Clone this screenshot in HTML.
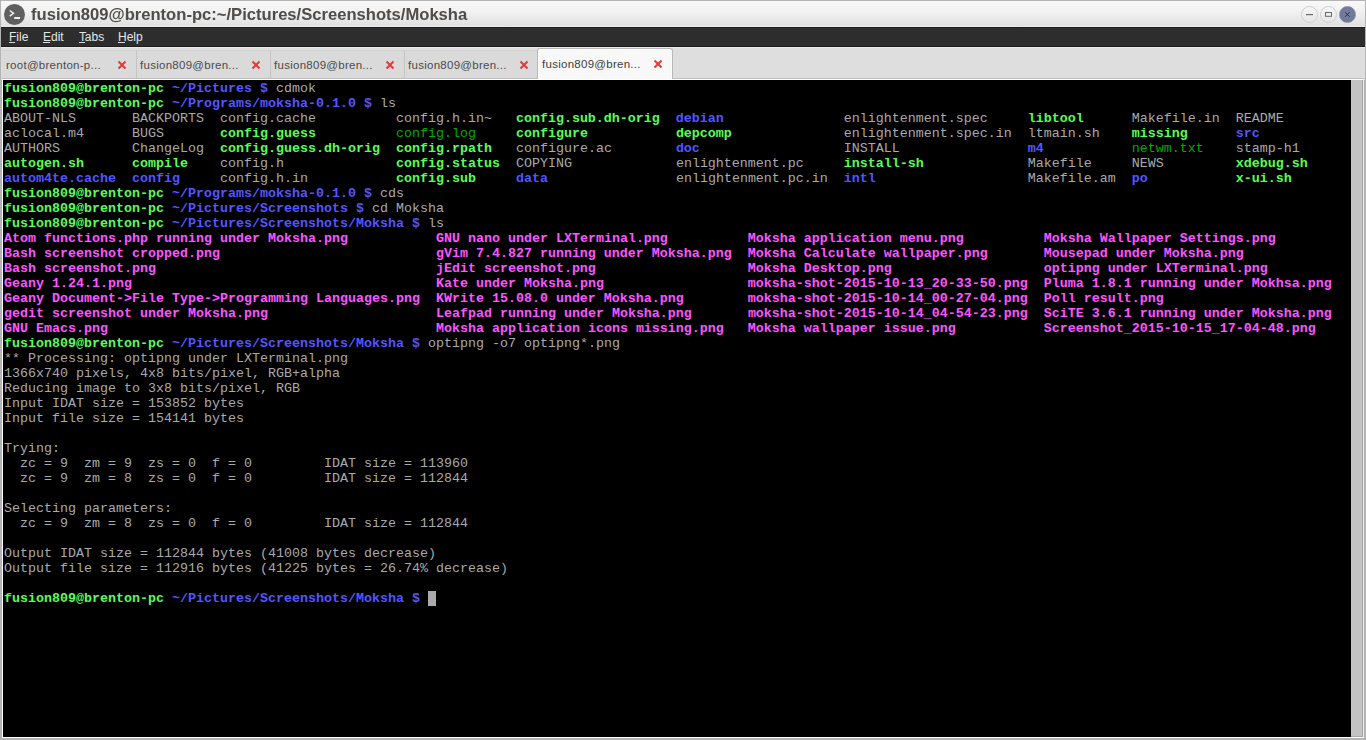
<!DOCTYPE html>
<html><head><meta charset="utf-8">
<style>
*{margin:0;padding:0;box-sizing:border-box}
html,body{width:1366px;height:740px;overflow:hidden;background:#b3b3b3}
body{position:relative;font-family:"Liberation Sans",sans-serif}
.abs{position:absolute}
#title{left:1px;top:1px;width:1364px;height:26px;background:linear-gradient(#f8f8f8,#f2f2f2 40%,#e0e0e0 96%,#e9e9e9 96%)}
#ticon{left:4px;top:4px;width:21px;height:21px;border-radius:50%;background:#5f5f5f}
#ttext{left:31px;top:5px;font-weight:bold;font-size:16.6px;color:#4f4c49;will-change:transform;white-space:nowrap;line-height:20px}
.wb{top:6px;width:17px;height:17px;border-radius:50%;border:1px solid #cfcfcf;background:linear-gradient(#f6f6f6,#e6e6e6)}
#menubar{left:1px;top:27px;width:1364px;height:20px;background:#2d2d2d;border-top:1px solid #1e1e1e;border-bottom:1px solid #1e1e1e}
#menubar span{position:absolute;top:1px;font-size:12px;color:#e6e6e6;line-height:16px}
#menubar u{text-decoration:none;position:relative}#menubar u::after{content:"";position:absolute;left:0;right:1.5px;top:12px;height:1px;background:#dcdcdc}
#tabarea{left:1px;top:47px;width:1364px;height:33px;background:#dedede;border-top:1px solid #e9e9e9}
.tab{top:50px;height:29px;background:#dadada;border-top:1px solid #d3d3d3;border-right:1px solid #c4c4c4;border-bottom:1px solid #b8b8b8;border-radius:0 0 2px 0}
.tt{top:58px;font-size:11.5px;letter-spacing:0.27px;color:#4a4a4a;white-space:nowrap;line-height:15px}
.tx{display:block}
.wb svg{display:block}
#atab{left:537px;top:48px;width:136px;height:31px;background:#f8f8f8;border:1px solid #b8b8b8;border-bottom:none;border-radius:3px 3px 0 0;box-shadow:inset 1px 1px 0 #fff,inset -1px 0 0 #fff}
#frame{left:2px;top:79px;width:1362px;height:659px;background:#fff}
#term{left:3px;top:80px;width:1348px;height:657px;background:#000}
#sb{left:1351px;top:80px;width:12px;height:657px;background:#c3c3c3;border-right:1px solid #a9a9a9;border-bottom:1px solid #a9a9a9}
pre{position:absolute;left:4px;top:81px;font-family:"Liberation Mono",monospace;font-size:13.3312px;line-height:15px;color:#aaaaaa;white-space:pre}
pre b{font-weight:bold}
.g{color:#55ff55}.b{color:#5555ff}.m{color:#ff55ff}.dg{color:#00aa00;font-weight:normal!important}
#cursor{left:428px;top:591px;width:8px;height:15px;background:#aaaaaa}
</style></head><body>
<div class="abs" id="title"></div>
<div class="abs" id="ticon"><svg width="21" height="21" style="position:absolute;left:0;top:0"><path d="M5.7 6.5 L9.5 9.35 L5.7 12.2" stroke="#f0f0f0" stroke-width="1.5" fill="none"/><rect x="10.2" y="13" width="5.8" height="2" fill="#f0f0f0"/></svg></div>
<div class="abs" id="ttext">fusion809@brenton-pc:~/Pictures/Screenshots/Moksha</div>
<div class="abs wb" style="left:1301px"><svg width="15" height="15" style="position:absolute;left:0;top:0"><rect x="4" y="7" width="7" height="1.2" fill="#6a6a6a"/></svg></div>
<div class="abs wb" style="left:1320px"><svg width="15" height="15" style="position:absolute;left:0;top:0"><rect x="4.5" y="5.5" width="6" height="3.8" stroke="#6a6a6a" stroke-width="1" fill="none"/></svg></div>
<div class="abs wb" style="left:1339px;border-color:#8a90a6;background:radial-gradient(circle at 50% 45%,#7880a0,#6b7392)"><svg width="15" height="15" style="position:absolute;left:0;top:0"><path d="M5.1 5.2 L9.6 9.7 M9.6 5.2 L5.1 9.7" stroke="#262a36" stroke-width="1"/></svg></div>
<div class="abs" id="menubar"><span style="left:8px"><u>F</u>ile</span><span style="left:42px"><u>E</u>dit</span><span style="left:78px"><u style="margin-right:-1.5px">T</u>abs</span><span style="left:117px"><u>H</u>elp</span></div>
<div class="abs" id="tabarea"></div>
<div class="abs tab" style="left:2px;width:135px"></div>
<div class="abs tab" style="left:137px;width:134px"></div>
<div class="abs tab" style="left:271px;width:134px"></div>
<div class="abs tab" style="left:405px;width:133px"></div>
<span class="abs tt" style="left:6px">root@brenton-p...</span><svg class="abs tx" style="left:117px;top:60px" width="10" height="10"><path d="M1.5 1.5L8.5 8.5M8.5 1.5L1.5 8.5" stroke="#e03a3a" stroke-width="2"/></svg>
<span class="abs tt" style="left:140px">fusion809@bren...</span><svg class="abs tx" style="left:251px;top:60px" width="10" height="10"><path d="M1.5 1.5L8.5 8.5M8.5 1.5L1.5 8.5" stroke="#e03a3a" stroke-width="2"/></svg>
<span class="abs tt" style="left:274px">fusion809@bren...</span><svg class="abs tx" style="left:385px;top:60px" width="10" height="10"><path d="M1.5 1.5L8.5 8.5M8.5 1.5L1.5 8.5" stroke="#e03a3a" stroke-width="2"/></svg>
<span class="abs tt" style="left:408px">fusion809@bren...</span><svg class="abs tx" style="left:519px;top:60px" width="10" height="10"><path d="M1.5 1.5L8.5 8.5M8.5 1.5L1.5 8.5" stroke="#e03a3a" stroke-width="2"/></svg>
<div class="abs" id="frame"></div>
<div class="abs" style="left:1363px;top:79px;width:1px;height:659px;background:#ececec"></div>
<div class="abs" style="left:2px;top:78px;width:1362px;height:1px;background:#bdbdbd"></div>
<div class="abs" id="atab"></div>
<span class="abs tt" style="left:542px;top:57px;color:#3c3c3c">fusion809@bren...</span><svg class="abs tx" style="left:653px;top:59px" width="10" height="10"><path d="M1.5 1.5L8.5 8.5M8.5 1.5L1.5 8.5" stroke="#e03a3a" stroke-width="2"/></svg>
<div class="abs" id="term"></div>
<div class="abs" id="sb"></div>
<pre><b class="g">fusion809@brenton-pc </b><b class="b">~/Pictures $ </b>cdmok
<b class="g">fusion809@brenton-pc </b><b class="b">~/Programs/moksha-0.1.0 $ </b>ls
ABOUT-NLS       BACKPORTS  config.cache          config.h.in~   <b class="g">config.sub.dh-orig</b>  <b class="b">debian</b>               enlightenment.spec     <b class="g">libtool</b>      Makefile.in  README
aclocal.m4      BUGS       <b class="g">config.guess</b>          <b class="dg">config.log</b>     <b class="g">configure</b>           <b class="g">depcomp</b>              enlightenment.spec.in  ltmain.sh    <b class="g">missing</b>      <b class="b">src</b>
AUTHORS         ChangeLog  <b class="g">config.guess.dh-orig</b>  <b class="g">config.rpath</b>   configure.ac        <b class="b">doc</b>                  INSTALL                <b class="b">m4</b>           <b class="dg">netwm.txt</b>    stamp-h1
<b class="g">autogen.sh</b>      <b class="g">compile</b>    config.h              <b class="g">config.status</b>  COPYING             enlightenment.pc     <b class="g">install-sh</b>             Makefile     NEWS         <b class="g">xdebug.sh</b>
<b class="b">autom4te.cache</b>  <b class="b">config</b>     config.h.in           <b class="g">config.sub</b>     <b class="b">data</b>                enlightenment.pc.in  <b class="b">intl</b>                   Makefile.am  <b class="b">po</b>           <b class="g">x-ui.sh</b>
<b class="g">fusion809@brenton-pc </b><b class="b">~/Programs/moksha-0.1.0 $ </b>cds
<b class="g">fusion809@brenton-pc </b><b class="b">~/Pictures/Screenshots $ </b>cd Moksha
<b class="g">fusion809@brenton-pc </b><b class="b">~/Pictures/Screenshots/Moksha $ </b>ls
<b class="m">Atom functions.php running under Moksha.png</b>           <b class="m">GNU nano under LXTerminal.png</b>          <b class="m">Moksha application menu.png</b>          <b class="m">Moksha Wallpaper Settings.png</b>
<b class="m">Bash screenshot cropped.png</b>                           <b class="m">gVim 7.4.827 running under Moksha.png</b>  <b class="m">Moksha Calculate wallpaper.png</b>       <b class="m">Mousepad under Moksha.png</b>
<b class="m">Bash screenshot.png</b>                                   <b class="m">jEdit screenshot.png</b>                   <b class="m">Moksha Desktop.png</b>                   <b class="m">optipng under LXTerminal.png</b>
<b class="m">Geany 1.24.1.png</b>                                      <b class="m">Kate under Moksha.png</b>                  <b class="m">moksha-shot-2015-10-13_20-33-50.png</b>  <b class="m">Pluma 1.8.1 running under Mokhsa.png</b>
<b class="m">Geany Document-&gt;File Type-&gt;Programming Languages.png</b>  <b class="m">KWrite 15.08.0 under Moksha.png</b>        <b class="m">moksha-shot-2015-10-14_00-27-04.png</b>  <b class="m">Poll result.png</b>
<b class="m">gedit screenshot under Moksha.png</b>                     <b class="m">Leafpad running under Moksha.png</b>       <b class="m">moksha-shot-2015-10-14_04-54-23.png</b>  <b class="m">SciTE 3.6.1 running under Moksha.png</b>
<b class="m">GNU Emacs.png</b>                                         <b class="m">Moksha application icons missing.png</b>   <b class="m">Moksha wallpaper issue.png</b>           <b class="m">Screenshot_2015-10-15_17-04-48.png</b>
<b class="g">fusion809@brenton-pc </b><b class="b">~/Pictures/Screenshots/Moksha $ </b>optipng -o7 optipng*.png
** Processing: optipng under LXTerminal.png
1366x740 pixels, 4x8 bits/pixel, RGB+alpha
Reducing image to 3x8 bits/pixel, RGB
Input IDAT size = 153852 bytes
Input file size = 154141 bytes

Trying:
  zc = 9  zm = 9  zs = 0  f = 0         IDAT size = 113960
  zc = 9  zm = 8  zs = 0  f = 0         IDAT size = 112844

Selecting parameters:
  zc = 9  zm = 8  zs = 0  f = 0         IDAT size = 112844

Output IDAT size = 112844 bytes (41008 bytes decrease)
Output file size = 112916 bytes (41225 bytes = 26.74% decrease)

<b class="g">fusion809@brenton-pc </b><b class="b">~/Pictures/Screenshots/Moksha $ </b></pre>
<div class="abs" id="cursor"></div>
</body></html>
